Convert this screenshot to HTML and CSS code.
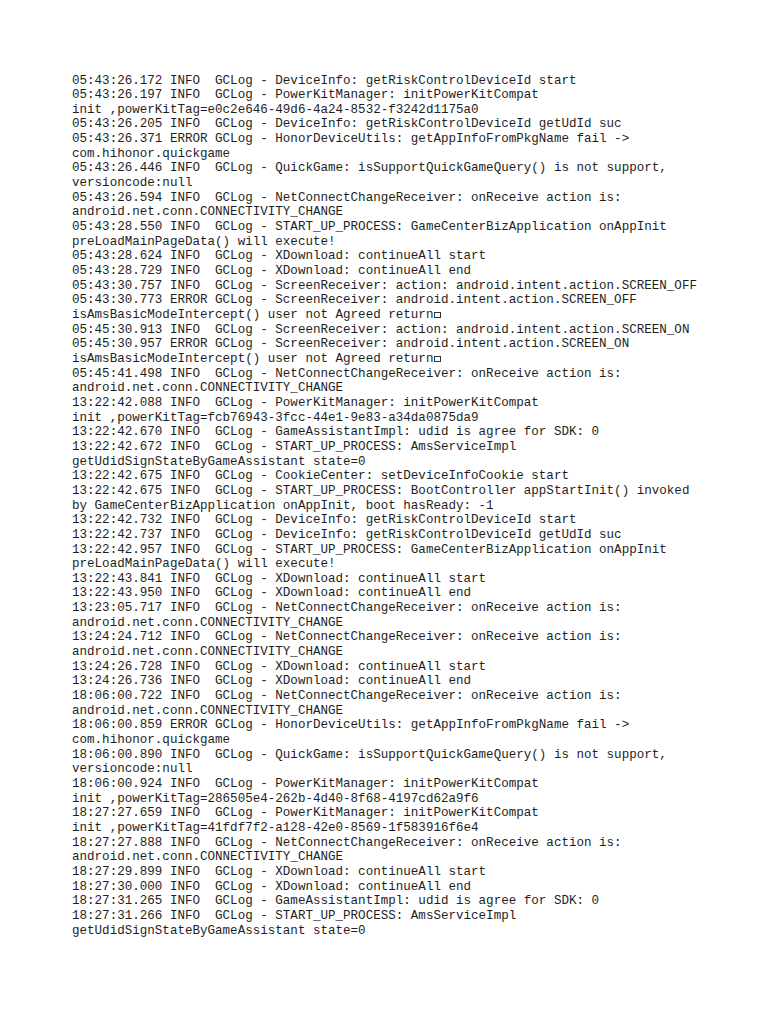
FILE: index.html
```html
<!DOCTYPE html>
<html>
<head>
<meta charset="utf-8">
<link rel="stylesheet" href="styles.css">
</head>
<body>
<pre class="log">05:43:26.172 INFO  GCLog - DeviceInfo: getRiskControlDeviceId start
05:43:26.197 INFO  GCLog - PowerKitManager: initPowerKitCompat
init ,powerKitTag=e0c2e646-49d6-4a24-8532-f3242d1175a0
05:43:26.205 INFO  GCLog - DeviceInfo: getRiskControlDeviceId getUdId suc
05:43:26.371 ERROR GCLog - HonorDeviceUtils: getAppInfoFromPkgName fail ->
com.hihonor.quickgame
05:43:26.446 INFO  GCLog - QuickGame: isSupportQuickGameQuery() is not support,
versioncode:null
05:43:26.594 INFO  GCLog - NetConnectChangeReceiver: onReceive action is:
android.net.conn.CONNECTIVITY_CHANGE
05:43:28.550 INFO  GCLog - START_UP_PROCESS: GameCenterBizApplication onAppInit
preLoadMainPageData() will execute!
05:43:28.624 INFO  GCLog - XDownload: continueAll start
05:43:28.729 INFO  GCLog - XDownload: continueAll end
05:43:30.757 INFO  GCLog - ScreenReceiver: action: android.intent.action.SCREEN_OFF
05:43:30.773 ERROR GCLog - ScreenReceiver: android.intent.action.SCREEN_OFF
isAmsBasicModeIntercept() user not Agreed return<span class="box"></span>
05:45:30.913 INFO  GCLog - ScreenReceiver: action: android.intent.action.SCREEN_ON
05:45:30.957 ERROR GCLog - ScreenReceiver: android.intent.action.SCREEN_ON
isAmsBasicModeIntercept() user not Agreed return<span class="box"></span>
05:45:41.498 INFO  GCLog - NetConnectChangeReceiver: onReceive action is:
android.net.conn.CONNECTIVITY_CHANGE
13:22:42.088 INFO  GCLog - PowerKitManager: initPowerKitCompat
init ,powerKitTag=fcb76943-3fcc-44e1-9e83-a34da0875da9
13:22:42.670 INFO  GCLog - GameAssistantImpl: udid is agree for SDK: 0
13:22:42.672 INFO  GCLog - START_UP_PROCESS: AmsServiceImpl
getUdidSignStateByGameAssistant state=0
13:22:42.675 INFO  GCLog - CookieCenter: setDeviceInfoCookie start
13:22:42.675 INFO  GCLog - START_UP_PROCESS: BootController appStartInit() invoked
by GameCenterBizApplication onAppInit, boot hasReady: -1
13:22:42.732 INFO  GCLog - DeviceInfo: getRiskControlDeviceId start
13:22:42.737 INFO  GCLog - DeviceInfo: getRiskControlDeviceId getUdId suc
13:22:42.957 INFO  GCLog - START_UP_PROCESS: GameCenterBizApplication onAppInit
preLoadMainPageData() will execute!
13:22:43.841 INFO  GCLog - XDownload: continueAll start
13:22:43.950 INFO  GCLog - XDownload: continueAll end
13:23:05.717 INFO  GCLog - NetConnectChangeReceiver: onReceive action is:
android.net.conn.CONNECTIVITY_CHANGE
13:24:24.712 INFO  GCLog - NetConnectChangeReceiver: onReceive action is:
android.net.conn.CONNECTIVITY_CHANGE
13:24:26.728 INFO  GCLog - XDownload: continueAll start
13:24:26.736 INFO  GCLog - XDownload: continueAll end
18:06:00.722 INFO  GCLog - NetConnectChangeReceiver: onReceive action is:
android.net.conn.CONNECTIVITY_CHANGE
18:06:00.859 ERROR GCLog - HonorDeviceUtils: getAppInfoFromPkgName fail ->
com.hihonor.quickgame
18:06:00.890 INFO  GCLog - QuickGame: isSupportQuickGameQuery() is not support,
versioncode:null
18:06:00.924 INFO  GCLog - PowerKitManager: initPowerKitCompat
init ,powerKitTag=286505e4-262b-4d40-8f68-4197cd62a9f6
18:27:27.659 INFO  GCLog - PowerKitManager: initPowerKitCompat
init ,powerKitTag=41fdf7f2-a128-42e0-8569-1f583916f6e4
18:27:27.888 INFO  GCLog - NetConnectChangeReceiver: onReceive action is:
android.net.conn.CONNECTIVITY_CHANGE
18:27:29.899 INFO  GCLog - XDownload: continueAll start
18:27:30.000 INFO  GCLog - XDownload: continueAll end
18:27:31.265 INFO  GCLog - GameAssistantImpl: udid is agree for SDK: 0
18:27:31.266 INFO  GCLog - START_UP_PROCESS: AmsServiceImpl
getUdidSignStateByGameAssistant state=0</pre>
</body>
</html>
```

FILE: styles.css
```css
html, body {
  margin: 0;
  padding: 0;
  background: #ffffff;
}
.log {
  margin: 0;
  padding: 73.5px 0 0 72px;
  font-family: "Liberation Mono", monospace;
  font-size: 12.55px;
  line-height: 14.66px;
  color: #1e1e1e;
  white-space: pre;
}
.box {
  display: inline-block;
  width: 5px;
  height: 4px;
  border: 1px solid #333;
  margin-left: 1px;
  vertical-align: baseline;
}
```
